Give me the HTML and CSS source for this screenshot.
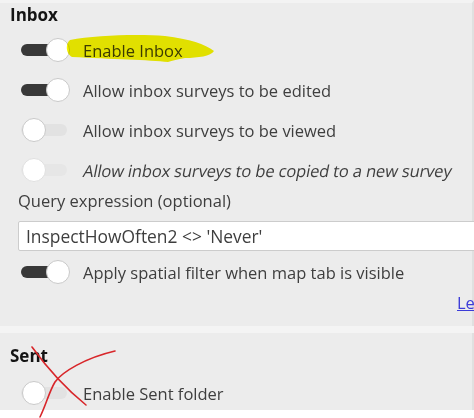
FILE: index.html
```html
<!DOCTYPE html>
<html lang="en">
<head>
<meta charset="utf-8">
<title>Inbox settings</title>
<link rel="stylesheet" href="styles.css">
</head>
<body>
<div class="page">
  <section class="panel inbox">
    <h2 class="heading">Inbox</h2>
    <div class="rows">
      <div class="row"><span class="toggle on"><span class="knob"></span></span><span class="label">Enable Inbox</span></div>
      <div class="row"><span class="toggle on"><span class="knob"></span></span><span class="label">Allow inbox surveys to be edited</span></div>
      <div class="row"><span class="toggle off"><span class="knob"></span></span><span class="label">Allow inbox surveys to be viewed</span></div>
      <div class="row"><span class="toggle off disabled"><span class="knob"></span></span><span class="label oblique">Allow inbox surveys to be copied to a new survey</span></div>
    </div>
    <div class="field">
      <div class="field-label">Query expression (optional)</div>
      <div class="input">InspectHowOften2 &lt;&gt; 'Never'</div>
    </div>
    <div class="row spatial"><span class="toggle on"><span class="knob"></span></span><span class="label">Apply spatial filter when map tab is visible</span></div>
    <div class="link-row"><a class="link" href="#">Learn more</a></div>
  </section>
  <div class="divider"></div>
  <section class="panel sent">
    <h2 class="heading">Sent</h2>
    <div class="row"><span class="toggle off"><span class="knob"></span></span><span class="label">Enable Sent folder</span></div>
  </section>

  <svg class="highlight" width="474" height="418" viewBox="0 0 474 418" aria-hidden="true">
    <path d="M70 40 C95 35 140 34 165 36 C190 39 205 44 214 51 C211 56 198 58 185 58 C178 59 172 61 168 62 C150 60 110 59 72 57 C66 54 65 44 70 40 Z" fill="#f4f200"/>
  </svg>
  <svg class="scribble" width="474" height="418" viewBox="0 0 474 418" aria-hidden="true">
    <path d="M32 347 C45 365 65 388 86 405" fill="none" stroke="#d8262a" stroke-width="1.6" stroke-linecap="round"/>
    <path d="M115 351 C85 358 62 372 55 382 C49 392 46 405 40 417" fill="none" stroke="#d8262a" stroke-width="1.6" stroke-linecap="round"/>
  </svg>
</div>
</body>
</html>
```
FILE: styles.css
```css
html, body {
  margin: 0;
  padding: 0;
  background: #ffffff;
}
body {
  font-family: "Open Sans", "Noto Sans", "Liberation Sans", sans-serif;
  color: #3e3e3e;
  overflow: hidden;
}
.page {
  position: relative;
  width: 474px;
  height: 418px;
  overflow: hidden;
}
.panel {
  background: #ececec;
  border-right: 2px solid #e0e0e0;
  box-sizing: border-box;
  width: 474px;
}
.inbox {
  height: 326px;
  padding-top: 4px;
  border-top: 3px solid #f3f3f3;
}
.divider {
  height: 7px;
  background: #f4f4f4;
}
.sent {
  height: 77px;
  padding-top: 12px;
}
.heading {
  margin: 0 0 0 10px;
  font-size: 17px;
  line-height: 22px;
  font-weight: 700;
  color: #141414;
}
.inbox .heading { margin-top: -3px; }
.rows {
  margin-top: 4px;
}
.row {
  display: flex;
  align-items: center;
  gap: 13px;
  height: 40px;
  padding-left: 21px;
}
.sent .row {
  height: 34px;
  margin-top: 9px;
}
.label {
  font-size: 16.5px;
  white-space: nowrap;
}
.oblique {
  display: inline-block;
  letter-spacing: -0.15px;
  transform: skewX(-11deg);
  transform-origin: 0 60%;
}
.toggle {
  position: relative;
  flex: none;
  width: 49px;
  height: 26px;
}
.toggle::before {
  content: "";
  position: absolute;
  left: 0;
  top: 7px;
  width: 46px;
  height: 12px;
  border-radius: 6px;
  background: #e2e2e2;
}
.toggle.on::before { background: #383838; }
.knob {
  position: absolute;
  top: 1px;
  width: 24px;
  height: 24px;
  border-radius: 50%;
  background: #ffffff;
  border: 1px solid #c9c9c9;
  box-sizing: border-box;
}
.toggle.on .knob { left: 25px; }
.toggle.off .knob { left: 1px; }
.toggle.disabled::before { background: #e6e6e6; }
.toggle.disabled .knob { border-color: #e0e0e0; }
.field {
  padding-left: 18px;
}
.field-label {
  font-size: 16.5px;
  line-height: 20px;
  margin-top: 1px;
  white-space: nowrap;
}
.input {
  margin-top: 10px;
  width: 520px;
  height: 30px;
  box-sizing: border-box;
  background: #ffffff;
  border: 1px solid #cccccc;
  border-radius: 2px;
  padding-left: 7px;
  font-size: 17.4px;
  line-height: 28px;
  white-space: nowrap;
}
.spatial {
  margin-top: 1px;
}
.link-row {
  padding-left: 457px;
  white-space: nowrap;
  font-size: 16.5px;
  line-height: 20px;
  margin-top: 1px;
}
.link {
  color: #3c3cd8;
  text-decoration: underline;
}
.highlight, .scribble {
  position: absolute;
  left: 0;
  top: 0;
  pointer-events: none;
}
.highlight { mix-blend-mode: multiply; }
```
